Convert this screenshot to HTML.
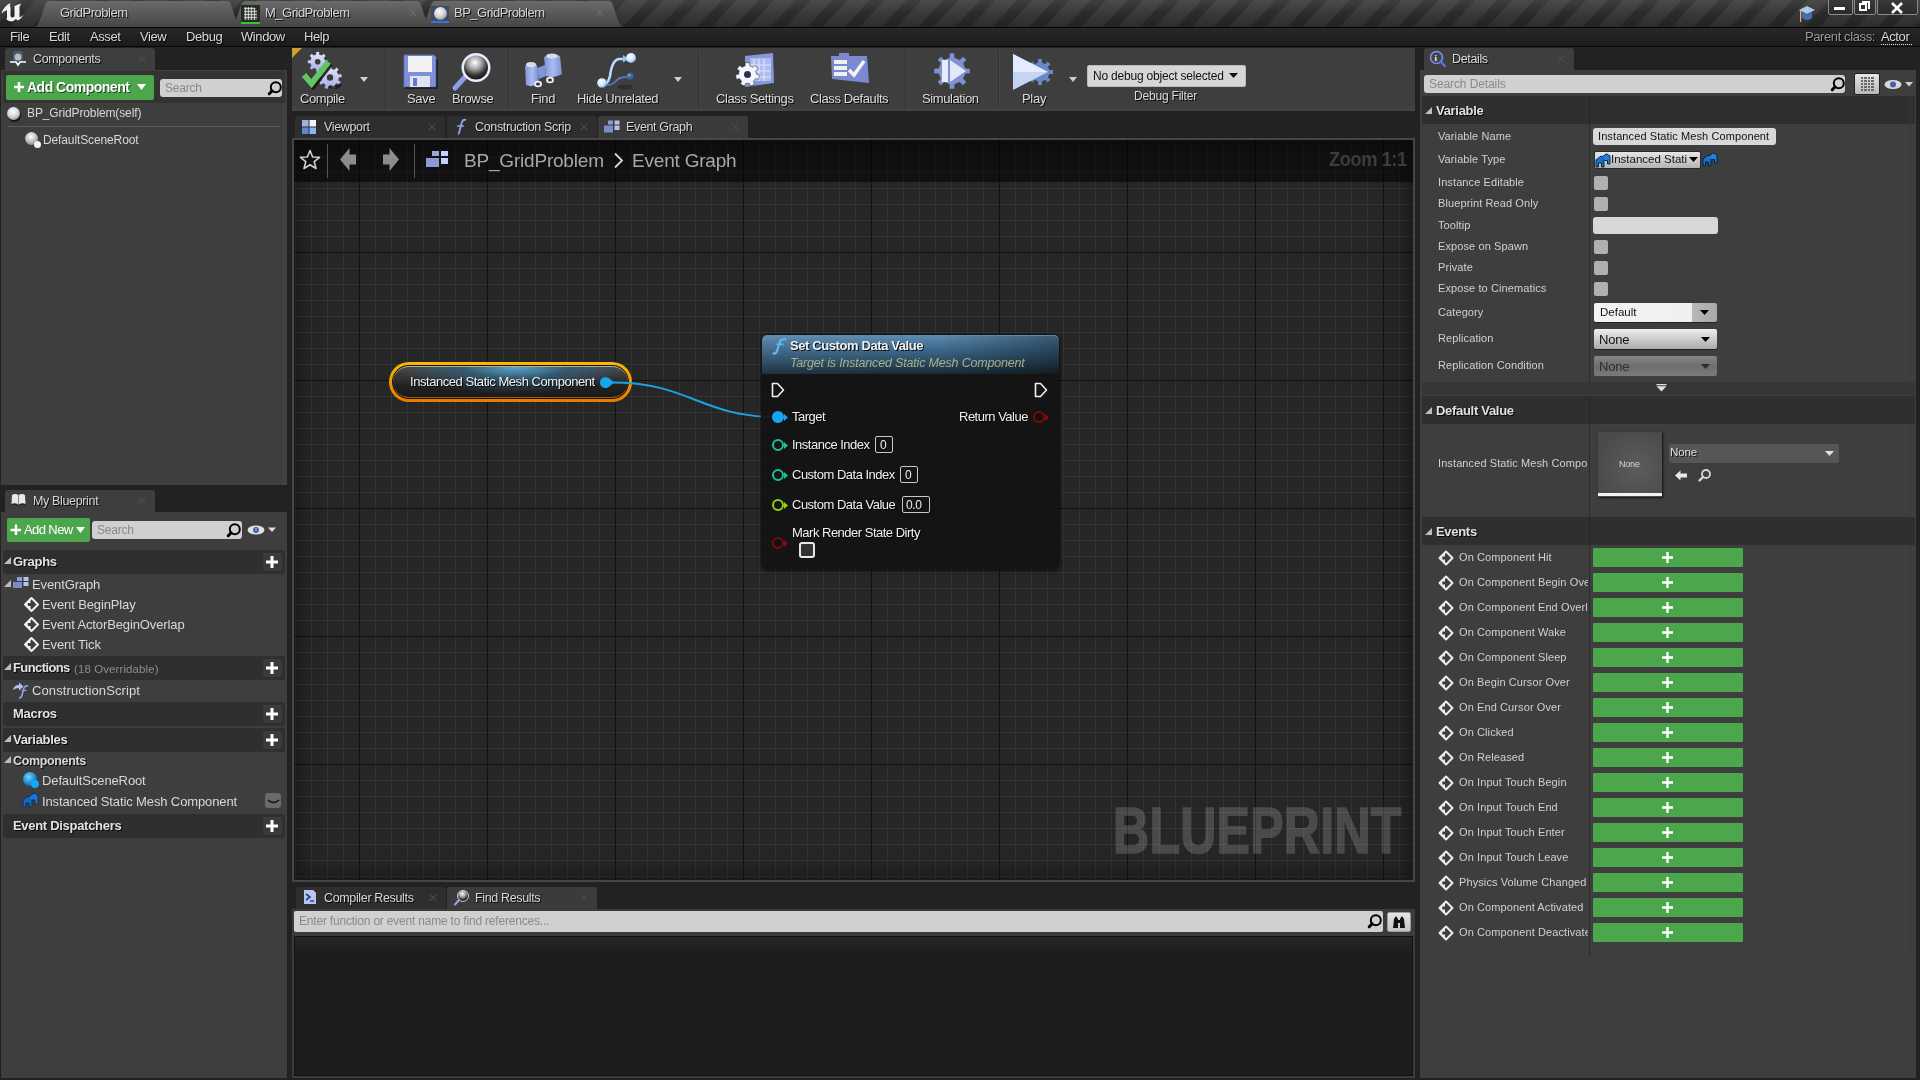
<!DOCTYPE html>
<html><head><meta charset="utf-8">
<style>
*{box-sizing:border-box;margin:0;padding:0}
html,body{width:1920px;height:1080px;overflow:hidden;background:#222;-webkit-font-smoothing:antialiased;font-family:"Liberation Sans",sans-serif;color:#dcdcdc}
.a{position:absolute}
.t{position:absolute;white-space:nowrap;line-height:1;font-size:13px;letter-spacing:-0.4px}
.sh{text-shadow:1px 1px 0 rgba(0,0,0,.9)}
.panel{background:#3e3e3e}
.tab{background:#3e3e3e;border-radius:3px 3px 0 0}
.itab{background:#2f2f2f;border-radius:3px 3px 0 0}
.x{position:absolute;color:#555;font-size:12px;line-height:1}
svg{position:absolute;overflow:visible}
</style></head><body><div id="root" style="position:absolute;left:0;top:0;width:1920px;height:1080px;will-change:transform">
<div class="a" style="left:0;top:0;width:1920px;height:27px;background:linear-gradient(to bottom,rgba(255,255,255,.09),rgba(255,255,255,0) 50%,rgba(0,0,0,.22)),repeating-linear-gradient(133deg,#393939 0,#393939 14px,#2b2b2b 16px,#2b2b2b 25px,#393939 27px)"></div>
<div class="a" style="left:0;top:27px;width:1920px;height:1px;background:#050505"></div>
<div class="a" style="left:0;top:28px;width:1920px;height:18px;background:linear-gradient(#272727,#1c1c1c)"></div>
<div class="a" style="left:0;top:46px;width:1920px;height:1px;background:#070707"></div>
<!-- UE logo -->
<svg style="left:0;top:0" width="30" height="27"><path d="M1.2 13.5 C3 9 6 5 10.5 3 L9.8 6 L10.5 7 L10.5 16 Q11 17.5 12.5 17.5 L14.5 16.5 L14.5 7 L14 6.5 Q17 4.5 21.5 3.5 L19.5 6.5 L19.5 17.5 Q21 16.5 23.5 15 Q20 20 17.5 20.5 L16 19 Q13 21.5 11.5 21.5 Q8 21 6 19 L7 18 L7 10 Q4 11 1.2 13.5 Z" fill="#f4f4f4"/></svg>
<!-- tabs -->
<svg style="left:0;top:0" width="640" height="27">
<defs>
<linearGradient id="tg" x1="0" y1="0" x2="0" y2="1"><stop offset="0" stop-color="#6a6a6a"/><stop offset="1" stop-color="#464646"/></linearGradient>
<linearGradient id="tga" x1="0" y1="0" x2="0" y2="1"><stop offset="0" stop-color="#6a6a6a"/><stop offset="1" stop-color="#464646"/></linearGradient>
</defs>
<path d="M34 27 C38 26.5 39 22 41 17 L45 5 C46 2 47 1 50 1 L226 1 C229 1 230 2 231 5 L235 17 C237 22 238 26.5 242 27 Z" fill="url(#tg)"/>
<path d="M230 27 C234 26.5 235 22 237 17 L241 5 C242 2 243 1 246 1 L416 1 C419 1 420 2 421 5 L425 17 C427 22 428 26.5 432 27 Z" fill="url(#tg)"/>
<path d="M420 27 C424 26.5 425 22 427 17 L431 5 C432 2 433 1 436 1 L608 1 C611 1 612 2 613 5 L617 17 C619 22 620 26.5 624 27 Z" fill="url(#tga)"/>
</svg>
<div class="t sh" style="left:60px;top:6px;font-size:13px;color:#d6d6d6;letter-spacing:-0.5px">GridProblem</div>
<!-- M icon -->
<div class="a" style="left:241px;top:5px;width:19px;height:19px;background:#24301f;border-bottom:2px solid #39c239"></div>
<div class="a" style="left:244px;top:7px;width:13px;height:13px;background:radial-gradient(circle,#e8e8e8 0.9px,transparent 1.2px) 0 0/3px 3px,#555;clip-path:polygon(0 0,75% 0,100% 25%,100% 100%,0 100%)"></div>
<div class="t sh" style="left:265px;top:6px;font-size:13px;color:#d6d6d6;letter-spacing:-0.5px">M_GridProblem</div>
<div class="x" style="left:408px;top:7px;color:#6a6a6a">&#x2715;</div>
<!-- BP icon -->
<div class="a" style="left:431px;top:6px;width:18px;height:17px;background:#3d4a63;border-bottom:2px solid #3a6fe6"></div>
<div class="a" style="left:434px;top:7px;width:13px;height:13px;border-radius:50%;background:radial-gradient(circle at 40% 35%,#fff,#ccc 50%,#777 90%)"></div>
<div class="t sh" style="left:454px;top:6px;font-size:13px;color:#d6d6d6;letter-spacing:-0.5px">BP_GridProblem</div>
<div class="x" style="left:595px;top:7px;color:#6a6a6a">&#x2715;</div>
<!-- cap -->
<svg style="left:1798px;top:5px" width="20" height="20">
<path d="M1 5 L9 1 L17 5 L9 9 Z" fill="#a9cbe6"/>
<path d="M4 7 L4 13 Q9 17 14 13 L14 7 L9 9 Z" fill="#4a6cae"/>
<rect x="2" y="6" width="1.2" height="11" fill="#e3b86a"/>
</svg>
<!-- window buttons -->
<div class="a" style="left:1828px;top:-2px;width:25px;height:17px;border:1px solid #8a8a8a;border-radius:2px;background:linear-gradient(#3a3a3a,#2a2a2a)"></div>
<div class="a" style="left:1834px;top:7px;width:11px;height:3px;background:#fff"></div>
<div class="a" style="left:1854px;top:-2px;width:22px;height:17px;border:1px solid #8a8a8a;border-radius:2px;background:linear-gradient(#3a3a3a,#2a2a2a)"></div>
<div class="a" style="left:1859px;top:3px;width:8px;height:8px;border:2px solid #fff"></div>
<div class="a" style="left:1862px;top:1px;width:8px;height:8px;border-top:2px solid #fff;border-right:2px solid #fff"></div>
<div class="a" style="left:1877px;top:-2px;width:41px;height:17px;border:1px solid #8a8a8a;border-radius:2px;background:linear-gradient(#3a3a3a,#2a2a2a)"></div>
<svg style="left:1890px;top:2px" width="14" height="12"><path d="M2 1 L12 11 M12 1 L2 11" stroke="#fff" stroke-width="2.6"/></svg>
<!-- menu -->
<div class="t sh" style="left:10px;top:30px;color:#d8d8d8">File</div>
<div class="t sh" style="left:49px;top:30px;color:#d8d8d8">Edit</div>
<div class="t sh" style="left:90px;top:30px;color:#d8d8d8">Asset</div>
<div class="t sh" style="left:140px;top:30px;color:#d8d8d8">View</div>
<div class="t sh" style="left:186px;top:30px;color:#d8d8d8">Debug</div>
<div class="t sh" style="left:241px;top:30px;color:#d8d8d8">Window</div>
<div class="t sh" style="left:304px;top:30px;color:#d8d8d8">Help</div>
<div class="t sh" style="left:1805px;top:30px;color:#9a9a9a">Parent class:</div>
<div class="t sh" style="left:1881px;top:30px;color:#d8d8d8">Actor</div>
<div class="a" style="left:1881px;top:44px;width:31px;height:0;border-top:1px dotted #ddd"></div>

<!-- Components tab -->
<div class="a tab" style="left:5px;top:48px;width:150px;height:22px;background:#3e3e3e"></div>
<svg style="left:9px;top:50px" width="18" height="18">
<rect x="4" y="1" width="10" height="11" rx="2" fill="#46587a"/>
<circle cx="9" cy="7" r="3.5" fill="#bbb"/>
<path d="M1 12 L7 12 L9 15 L11 12 L17 12" stroke="#fff" stroke-width="1.6" fill="none"/>
</svg>
<div class="t sh" style="left:33px;top:53px;color:#d6d6d6;font-size:12.5px;letter-spacing:-0.35px">Components</div>
<div class="x" style="left:137px;top:53px;color:#4c4c4c">&#x2715;</div>
<div class="a" style="left:1px;top:70px;width:286px;height:415px;background:#3e3e3e"></div>
<div class="a" style="left:3px;top:71px;width:282px;height:32px;background:#333"></div>
<div class="a" style="left:6px;top:75px;width:148px;height:25px;background:#4ca64c;border-radius:2px"></div>
<svg style="left:13px;top:81px" width="12" height="12"><path d="M6 1 V11 M1 6 H11" stroke="#fff" stroke-width="2.6"/></svg>
<div class="t" style="left:27px;top:80px;font-weight:bold;font-size:14px;color:#fff;letter-spacing:-0.5px;text-shadow:1px 1px 0 rgba(0,0,0,.6)">Add Component</div>
<svg style="left:137px;top:84px" width="10" height="8"><path d="M0 0 H9 L4.5 6 Z" fill="#fff"/></svg>
<div class="a" style="left:160px;top:79px;width:122px;height:18px;background:#d0d0d0;border-radius:3px"></div>
<div class="t" style="left:165px;top:82px;color:#8a8a8a;font-size:12px;letter-spacing:-0.2px">Search</div>
<svg style="left:266px;top:81px" width="16" height="15"><circle cx="9.8" cy="6.2" r="5" stroke="#000" stroke-width="2" fill="none"/><path d="M6.2 9.8 L3.2 12.8" stroke="#000" stroke-width="3" stroke-linecap="round"/></svg>
<div class="a" style="left:282px;top:103px;width:5px;height:382px;background:#424242"></div>
<!-- BP_GridProblem(self) -->
<div class="a" style="left:7px;top:107px;width:13px;height:13px;border-radius:50%;background:radial-gradient(circle at 45% 35%,#fff,#d8d8d8 45%,#8a8a8a 85%);box-shadow:1px 2px 1px rgba(0,0,0,.7)"></div>
<div class="t" style="left:27px;top:107px;font-size:12px;letter-spacing:-0.12px;color:#d8d8d8">BP_GridProblem(self)</div>
<div class="a" style="left:8px;top:126px;width:272px;height:1px;background:#585858"></div>
<div class="a" style="left:25px;top:132px;width:13px;height:13px;border-radius:50%;background:radial-gradient(circle at 45% 35%,#fff,#bbb 50%,#777 90%)"></div>
<div class="a" style="left:34px;top:141px;width:7px;height:7px;border-radius:50%;background:#f4f4f4"></div>
<div class="t" style="left:43px;top:134px;font-size:12px;letter-spacing:-0.1px;color:#d8d8d8;letter-spacing:-0.12px">DefaultSceneRoot</div>

<!-- My Blueprint tab -->
<div class="a tab" style="left:5px;top:490px;width:150px;height:22px;background:#3e3e3e"></div>
<svg style="left:11px;top:492px" width="16" height="16">
<path d="M1 3 Q4 1 7.5 3 Q11 1 14 3 L14.5 12 Q11 10.5 7.5 12.5 Q4 10.5 0.5 12 Z" fill="#e8e8e8"/>
<path d="M7.5 3 V12.5" stroke="#888" stroke-width="1"/>
<path d="M0.5 12.5 Q4 11.5 7.5 13.5 Q11 11.5 14.5 12.5" stroke="#222" stroke-width="1" fill="none"/>
</svg>
<div class="t sh" style="left:33px;top:495px;color:#d6d6d6;font-size:12.5px;letter-spacing:-0.35px">My Blueprint</div>
<div class="x" style="left:137px;top:495px;color:#4c4c4c">&#x2715;</div>
<div class="a" style="left:1px;top:512px;width:286px;height:566px;background:#3e3e3e"></div>
<div class="a" style="left:7px;top:518px;width:83px;height:24px;background:#4ca64c;border-radius:2px"></div>
<svg style="left:10px;top:524px" width="12" height="12"><path d="M6 0.5 V11 M0.5 6 H11" stroke="#fff" stroke-width="2.4"/></svg>
<div class="t" style="left:24px;top:523px;font-size:13px;color:#fff;letter-spacing:-0.6px">Add New</div>
<svg style="left:76px;top:527px" width="10" height="8"><path d="M0 0 H9 L4.5 6 Z" fill="#fff"/></svg>
<div class="a" style="left:92px;top:521px;width:150px;height:18px;background:#d0d0d0;border-radius:3px"></div>
<div class="t" style="left:97px;top:524px;color:#8a8a8a;font-size:12px;letter-spacing:-0.2px">Search</div>
<svg style="left:225px;top:523px" width="16" height="15"><circle cx="9.8" cy="6.2" r="5" stroke="#000" stroke-width="2" fill="none"/><path d="M6.2 9.8 L3.2 12.8" stroke="#000" stroke-width="3" stroke-linecap="round"/></svg>
<svg style="left:247px;top:524px" width="30" height="12">
<ellipse cx="9" cy="6" rx="8.5" ry="4.5" fill="#e0e0e0"/><circle cx="9" cy="6" r="3" fill="#4760a8"/><circle cx="9" cy="5.5" r="1.2" fill="#8a9ee0"/>
<path d="M21 3.5 H29 L25 8 Z" fill="#ddd"/>
</svg>

<!-- Graphs header -->
<div class="a" style="left:3px;top:550px;width:282px;height:24px;background:#2f2f2f;border-radius:3px"></div>
<svg style="left:4px;top:557px" width="8" height="8"><path d="M7 0 V7 H0 Z" fill="#bdbdbd"/></svg>
<div class="t sh" style="left:13px;top:555px;font-weight:bold;color:#e2e2e2;letter-spacing:-0.3px">Graphs</div>
<div class="a" style="left:263px;top:553px;width:19px;height:18px;background:#3a3a3a;border-radius:2px"></div>
<svg style="left:266px;top:556px" width="12" height="12"><path d="M6 0 V12 M0 6 H12" stroke="#fff" stroke-width="3"/></svg>
<svg style="left:4px;top:580px" width="8" height="8"><path d="M7 0 V7 H0 Z" fill="#bdbdbd"/></svg>
<svg style="left:13px;top:576px" width="17" height="13">
<rect x="4" y="1" width="5" height="4" fill="#8d9bd6"/><rect x="10.5" y="1" width="5" height="4" fill="#b8c2ee"/>
<rect x="0" y="6" width="9" height="6" fill="#7c8bc9"/><rect x="10.5" y="6" width="5" height="4" fill="#b8c2ee"/>
</svg>
<div class="t" style="left:32px;top:578px;color:#d8d8d8;letter-spacing:-0.12px">EventGraph</div>
<svg style="left:24px;top:597px" width="15" height="15"><path d="M7.5 1 L14 7.5 L7.5 14 L1 7.5 Z" stroke="#f2f2f2" stroke-width="2" fill="none" stroke-linejoin="round"/><path d="M1 7.5 L6.5 2 L6.5 13 Z" fill="#f2f2f2"/><rect x="3.8" y="6" width="3.2" height="3" fill="#3e3e3e"/></svg>
<div class="t" style="left:42px;top:598px;color:#d8d8d8;letter-spacing:-0.12px">Event BeginPlay</div>
<svg style="left:24px;top:617px" width="15" height="15"><path d="M7.5 1 L14 7.5 L7.5 14 L1 7.5 Z" stroke="#f2f2f2" stroke-width="2" fill="none" stroke-linejoin="round"/><path d="M1 7.5 L6.5 2 L6.5 13 Z" fill="#f2f2f2"/><rect x="3.8" y="6" width="3.2" height="3" fill="#3e3e3e"/></svg>
<div class="t" style="left:42px;top:618px;color:#d8d8d8;letter-spacing:-0.12px">Event ActorBeginOverlap</div>
<svg style="left:24px;top:637px" width="15" height="15"><path d="M7.5 1 L14 7.5 L7.5 14 L1 7.5 Z" stroke="#f2f2f2" stroke-width="2" fill="none" stroke-linejoin="round"/><path d="M1 7.5 L6.5 2 L6.5 13 Z" fill="#f2f2f2"/><rect x="3.8" y="6" width="3.2" height="3" fill="#3e3e3e"/></svg>
<div class="t" style="left:42px;top:638px;color:#d8d8d8;letter-spacing:-0.12px">Event Tick</div>

<!-- Functions -->
<div class="a" style="left:3px;top:656px;width:282px;height:24px;background:#2f2f2f;border-radius:3px"></div>
<svg style="left:4px;top:663px" width="8" height="8"><path d="M7 0 V7 H0 Z" fill="#bdbdbd"/></svg>
<div class="t sh" style="left:13px;top:661px;font-weight:bold;color:#e2e2e2;letter-spacing:-0.6px">Functions</div>
<div class="t" style="left:74px;top:664px;color:#8c8c8c;font-size:11.5px;letter-spacing:0.1px">(18 Overridable)</div>
<div class="a" style="left:263px;top:659px;width:19px;height:18px;background:#3a3a3a;border-radius:2px"></div>
<svg style="left:266px;top:662px" width="12" height="12"><path d="M6 0 V12 M0 6 H12" stroke="#fff" stroke-width="3"/></svg>
<svg style="left:12px;top:682px" width="18" height="17"><path d="M1 8 Q2 3 7 3 L7 0.5 L11.5 4.5 L7 8.5 L7 6 Q3.5 6 1 8 Z" fill="#b4c2f0"/><path d="M7.5 16 Q9.5 16 10.3 12 L12 6 Q12.8 3.5 15.5 4" stroke="#8fa1e6" stroke-width="1.6" fill="none" stroke-linecap="round"/><path d="M9.5 8.5 H14.5" stroke="#8fa1e6" stroke-width="1.2"/></svg>
<div class="t" style="left:32px;top:684px;color:#d8d8d8;letter-spacing:0.1px">ConstructionScript</div>

<!-- Macros -->
<div class="a" style="left:3px;top:702px;width:282px;height:24px;background:#2f2f2f;border-radius:3px"></div>
<div class="t sh" style="left:13px;top:707px;font-weight:bold;color:#e2e2e2;letter-spacing:-0.3px">Macros</div>
<div class="a" style="left:263px;top:705px;width:19px;height:18px;background:#3a3a3a;border-radius:2px"></div>
<svg style="left:266px;top:708px" width="12" height="12"><path d="M6 0 V12 M0 6 H12" stroke="#fff" stroke-width="3"/></svg>
<!-- Variables -->
<div class="a" style="left:3px;top:728px;width:282px;height:24px;background:#2f2f2f;border-radius:3px"></div>
<svg style="left:4px;top:735px" width="8" height="8"><path d="M7 0 V7 H0 Z" fill="#bdbdbd"/></svg>
<div class="t sh" style="left:13px;top:733px;font-weight:bold;color:#e2e2e2;letter-spacing:-0.3px">Variables</div>
<div class="a" style="left:263px;top:731px;width:19px;height:18px;background:#3a3a3a;border-radius:2px"></div>
<svg style="left:266px;top:734px" width="12" height="12"><path d="M6 0 V12 M0 6 H12" stroke="#fff" stroke-width="3"/></svg>
<svg style="left:4px;top:756px" width="8" height="8"><path d="M7 0 V7 H0 Z" fill="#bdbdbd"/></svg>
<div class="t sh" style="left:13px;top:755px;font-weight:bold;font-size:12px;color:#d8d8d8;font-size:12.5px;letter-spacing:-0.35px">Components</div>
<div class="a" style="left:23px;top:772px;width:14px;height:14px;border-radius:50%;background:radial-gradient(circle at 40% 35%,#7fd0ff,#1e8fd8 50%,#0b5a9a 90%)"></div>
<div class="a" style="left:31px;top:780px;width:8px;height:8px;border-radius:50%;background:#15a8f0"></div>
<div class="t" style="left:42px;top:774px;color:#d8d8d8;letter-spacing:-0.12px">DefaultSceneRoot</div>
<svg style="left:22px;top:792px" width="17" height="16">
<path d="M1 8 L6 4 L10 6 L10 15 L7 15 L7 11 L4 11 L4 15 L1 15 Z" fill="#1565b8" stroke="#0a2a50" stroke-width=".8"/>
<path d="M7 5 L12 1 L16 3 L16 12 L13 12 L13 8 L10 8" fill="#1a78d0" stroke="#0a2a50" stroke-width=".8"/>
</svg>
<div class="t" style="left:42px;top:795px;color:#d8d8d8;letter-spacing:-0.12px">Instanced Static Mesh Component</div>
<div class="a" style="left:265px;top:793px;width:16px;height:15px;background:#6a6a6a;border-radius:3px"></div>
<svg style="left:268px;top:800px" width="11" height="4"><path d="M0 0 Q5.5 5 11 0" stroke="#111" stroke-width="1.6" fill="none"/></svg>
<!-- Event Dispatchers -->
<div class="a" style="left:3px;top:814px;width:282px;height:24px;background:#2f2f2f;border-radius:3px"></div>
<div class="t sh" style="left:13px;top:819px;font-weight:bold;color:#e2e2e2;letter-spacing:-0.3px">Event Dispatchers</div>
<div class="a" style="left:263px;top:817px;width:19px;height:18px;background:#3a3a3a;border-radius:2px"></div>
<svg style="left:266px;top:820px" width="12" height="12"><path d="M6 0 V12 M0 6 H12" stroke="#fff" stroke-width="3"/></svg>

<div class="a" style="left:292px;top:48px;width:1123px;height:63px;background:linear-gradient(#3e3e3e 0,#3e3e3e 90%,#444 100%)"></div>
<svg style="left:292px;top:48px" width="12" height="12"><path d="M0 0 H10 L0 10 Z" fill="#c9a227"/></svg>
<div class="a" style="left:385px;top:50px;width:2px;height:59px;background:#333;border-right:1px solid #454545"></div>
<div class="a" style="left:508px;top:50px;width:2px;height:59px;background:#333;border-right:1px solid #454545"></div>
<div class="a" style="left:698px;top:50px;width:2px;height:59px;background:#333;border-right:1px solid #454545"></div>
<div class="a" style="left:905px;top:50px;width:2px;height:59px;background:#333;border-right:1px solid #454545"></div>
<div class="a" style="left:998px;top:50px;width:2px;height:59px;background:#333;border-right:1px solid #454545"></div>
<svg style="left:300px;top:50px" width="50" height="45"><defs><linearGradient id="gg" x1="0" y1="0" x2="0" y2="1"><stop offset="0" stop-color="#e6e9ff"/><stop offset="1" stop-color="#a3aae0"/></linearGradient></defs><path d="M16.3 4.5 L16.2 1.9 L19.2 1.9 L19.1 4.5 L21.8 5.6 L23.6 3.8 L25.7 5.9 L23.9 7.7 L25.0 10.4 L27.6 10.3 L27.6 13.3 L25.0 13.2 L23.9 15.9 L25.7 17.7 L23.6 19.8 L21.8 18.0 L19.1 19.1 L19.2 21.7 L16.2 21.7 L16.3 19.1 L13.6 18.0 L11.8 19.8 L9.7 17.7 L11.5 15.9 L10.4 13.2 L7.8 13.3 L7.8 10.3 L10.4 10.4 L11.5 7.7 L9.7 5.9 L11.8 3.8 L13.6 5.6Z" fill="url(#gg)"/><circle cx="17.7" cy="11.8" r="2.8" fill="#3a3a3a"/><path d="M28.5 18.8 L28.4 15.8 L31.6 15.8 L31.5 18.8 L34.4 19.9 L36.3 17.5 L38.7 19.5 L36.7 21.8 L38.3 24.5 L41.2 23.9 L41.8 27.0 L38.8 27.5 L38.3 30.5 L40.9 32.0 L39.3 34.7 L36.7 33.2 L34.4 35.1 L35.5 38.0 L32.5 39.0 L31.5 36.2 L28.5 36.2 L27.5 39.0 L24.5 38.0 L25.6 35.1 L23.3 33.2 L20.7 34.7 L19.1 32.0 L21.7 30.5 L21.2 27.5 L18.2 27.0 L18.8 23.9 L21.7 24.5 L23.3 21.8 L21.3 19.5 L23.7 17.5 L25.6 19.9Z" fill="url(#gg)"/><circle cx="30" cy="27.5" r="3.2" fill="#3a3a3a"/><path d="M29 36 Q36 40 41 34" stroke="#111" stroke-width="3" fill="none" opacity=".7"/><path d="M4 25 L11.5 33.5 L28.5 12" stroke="#111" stroke-width="7" fill="none" stroke-miterlimit="2" transform="translate(1.5,1.5)" opacity=".85"/><path d="M4 25 L11.5 33.5 L28.5 12" stroke="#62c463" stroke-width="6" fill="none" stroke-miterlimit="2"/></svg>
<div class="t sh" style="left:300px;top:92px;font-size:13px;color:#dcdcdc;letter-spacing:-0.4px">Compile</div>
<svg style="left:360px;top:77px" width="10" height="6"><path d="M0 0 H8 L4 5 Z" fill="#cfcfcf"/></svg>
<svg style="left:403px;top:54px" width="36" height="36">
<path d="M1 1 H31 L33 3 V33 H1 Z" fill="#7f8fd8" stroke="#5f6fb8" stroke-width="1"/>
<rect x="5" y="2" width="24" height="16" fill="#f2f2f2"/><rect x="7" y="22" width="20" height="11" fill="#dfe3f6"/><rect x="10" y="24" width="4" height="8" fill="#6778c8"/>
<path d="M2 34 H34 V5" stroke="#111" stroke-width="2" fill="none" opacity=".6"/>
</svg>
<div class="t sh" style="left:407px;top:92px;font-size:13px;color:#dcdcdc;letter-spacing:-0.3px">Save</div>
<svg style="left:450px;top:51px" width="45" height="42"><defs><radialGradient id="bg1" cx=".45" cy=".3" r=".75"><stop offset="0" stop-color="#fff"/><stop offset=".35" stop-color="#aaa"/><stop offset=".7" stop-color="#333"/><stop offset="1" stop-color="#111"/></radialGradient></defs><path d="M15 26 L5 37" stroke="#8d9de6" stroke-width="5" stroke-linecap="round"/><circle cx="26" cy="16.5" r="14.5" fill="#e8ecff"/><circle cx="26" cy="16.5" r="12" fill="url(#bg1)"/></svg>
<div class="t sh" style="left:452px;top:92px;font-size:13px;color:#dcdcdc;letter-spacing:-0.3px">Browse</div>
<svg style="left:522px;top:52px" width="44" height="40"><defs><linearGradient id="bn" x1="0" y1="0" x2="1" y2="0"><stop offset="0" stop-color="#7f95d8"/><stop offset=".5" stop-color="#a9bbf0"/><stop offset="1" stop-color="#7d90d0"/></linearGradient></defs><path d="M3 14 Q9 10 15 13 L17 31 Q11 36 4 33 Z" fill="url(#bn)"/><path d="M22 5 Q30 1 38 4 L40 22 Q32 27 24 24 Z" fill="url(#bn)"/><path d="M15 16 L23 13 L24 24 L17 27 Z" fill="#8196d6"/><ellipse cx="9" cy="12.5" rx="5" ry="2.6" fill="#d8dce8"/><ellipse cx="30" cy="4" rx="6" ry="2.6" fill="#d8dce8"/><ellipse cx="16" cy="32" rx="4" ry="3.2" fill="#e8ecf4"/><ellipse cx="16" cy="32" rx="2" ry="1.5" fill="#333"/><ellipse cx="28" cy="28" rx="4" ry="3.2" fill="#e8ecf4"/><ellipse cx="28" cy="28" rx="2" ry="1.5" fill="#333"/></svg>
<div class="t sh" style="left:531px;top:92px;font-size:13px;color:#dcdcdc;letter-spacing:-0.3px">Find</div>
<svg style="left:595px;top:50px" width="45" height="42"><defs><radialGradient id="hb" cx=".4" cy=".35" r=".7"><stop offset="0" stop-color="#fff"/><stop offset=".6" stop-color="#cfe6ff"/><stop offset="1" stop-color="#6a9ee0"/></radialGradient></defs><ellipse cx="30" cy="37" rx="8" ry="2.5" fill="#111" opacity=".35"/><path d="M9 34 Q13 34 15 26 Q17 10 24 9 L29 9" stroke="#b8dcff" stroke-width="2.6" fill="none"/><path d="M28 5 L33.5 9 L28 12.5 Z" fill="#8cc4f4"/><path d="M10 35 Q18 35 21 31 Q24 27 32 27" stroke="#5a74b8" stroke-width="2" fill="none"/><circle cx="7" cy="33" r="4.8" fill="url(#hb)"/><circle cx="36" cy="8" r="5" fill="url(#hb)"/><circle cx="35" cy="26" r="3.5" fill="#3f5fa8"/><circle cx="34.3" cy="25.3" r="1.4" fill="#7fb070"/></svg>
<div class="t sh" style="left:577px;top:92px;font-size:13px;color:#dcdcdc;letter-spacing:-0.4px">Hide Unrelated</div>
<svg style="left:674px;top:77px" width="10" height="6"><path d="M0 0 H8 L4 5 Z" fill="#cfcfcf"/></svg>
<svg style="left:728px;top:53px" width="50" height="40">
<path d="M17 3 L45 0 L46 30 L17 34 Z" fill="#8797dc"/><path d="M22 5 H43 V28 H22 Z" fill="#b0bcf0"/>
<path d="M26 6 V28 M31 6 V28 M36 6 V28 M22 12 H43 M22 18 H43 M22 24 H43" stroke="#dde3ff" stroke-width="1.2"/>
<path d="M17.3 12.8 L17.2 9.7 L21.8 9.7 L21.7 12.8 L25.0 14.3 L27.3 12.4 L30.1 16.0 L27.7 17.8 L28.5 21.3 L31.5 21.9 L30.5 26.4 L27.5 25.6 L25.3 28.4 L26.7 31.1 L22.5 33.1 L21.3 30.3 L17.7 30.3 L16.5 33.1 L12.3 31.1 L13.7 28.4 L11.5 25.6 L8.5 26.4 L7.5 21.9 L10.5 21.3 L11.3 17.8 L8.9 16.0 L11.7 12.4 L14.0 14.3Z" fill="#f4f6ff" stroke="#222" stroke-width=".5"/><circle cx="19.5" cy="21.5" r="3.5" fill="#2a3050"/>
</svg>
<div class="t sh" style="left:716px;top:92px;font-size:13px;color:#dcdcdc;letter-spacing:-0.4px">Class Settings</div>
<svg style="left:829px;top:53px" width="42" height="38">
<path d="M2 3 H38 L40 30 L3 26 Z" fill="#7b8ad0"/><path d="M10 0 H20 V4 H10Z" fill="#7b8ad0"/>
<rect x="5" y="7" width="13" height="4" fill="#f0f0f0"/><rect x="5" y="13" width="13" height="4" fill="#f0f0f0"/><rect x="5" y="19" width="13" height="4" fill="#f0f0f0"/>
<path d="M20 17 L25 22 L35 8" stroke="#f4f4f4" stroke-width="3.5" fill="none"/>
</svg>
<div class="t sh" style="left:810px;top:92px;font-size:13px;color:#dcdcdc;letter-spacing:-0.4px">Class Defaults</div>
<svg style="left:930px;top:52px" width="45" height="40">
<path d="M19.6 5.7 L19.7 1.2 L24.3 1.2 L24.4 5.7 L29.7 7.9 L33.0 4.7 L36.3 8.0 L33.1 11.3 L35.3 16.6 L39.8 16.7 L39.8 21.3 L35.3 21.4 L33.1 26.7 L36.3 30.0 L33.0 33.3 L29.7 30.1 L24.4 32.3 L24.3 36.8 L19.7 36.8 L19.6 32.3 L14.3 30.1 L11.0 33.3 L7.7 30.0 L10.9 26.7 L8.7 21.4 L4.2 21.3 L4.2 16.7 L8.7 16.6 L10.9 11.3 L7.7 8.0 L11.0 4.7 L14.3 7.9Z" fill="#8090d0"/>
<rect x="12" y="8" width="6" height="22" fill="#e8ecfa"/><path d="M20 8 L36 19 L20 30 Z" fill="#e2e8fa"/>
</svg>
<div class="t sh" style="left:922px;top:92px;font-size:13px;color:#dcdcdc;letter-spacing:-0.4px">Simulation</div>
<svg style="left:1010px;top:52px" width="50" height="42">
<path d="M28.1 10.7 L28.1 7.1 L31.9 7.1 L31.9 10.7 L35.3 12.1 L37.7 9.5 L40.5 12.3 L37.9 14.7 L39.3 18.1 L42.9 18.1 L42.9 21.9 L39.3 21.9 L37.9 25.3 L40.5 27.7 L37.7 30.5 L35.3 27.9 L31.9 29.3 L31.9 32.9 L28.1 32.9 L28.1 29.3 L24.7 27.9 L22.3 30.5 L19.5 27.7 L22.1 25.3 L20.7 21.9 L17.1 21.9 L17.1 18.1 L20.7 18.1 L22.1 14.7 L19.5 12.3 L22.3 9.5 L24.7 12.1Z" fill="#6a88c8"/>
<path d="M3 2 L38 20 L3 38 Z" fill="#c6d4f4"/><path d="M3 2 L38 20 L3 20 Z" fill="#e2ebff"/>
</svg>
<div class="t sh" style="left:1022px;top:92px;font-size:13px;color:#dcdcdc;letter-spacing:-0.3px">Play</div>
<svg style="left:1069px;top:77px" width="10" height="6"><path d="M0 0 H8 L4 5 Z" fill="#cfcfcf"/></svg>
<div class="a" style="left:1087px;top:65px;width:159px;height:22px;background:#d6d6d6;border-radius:2px;border:1px solid #bbb"></div>
<div class="t" style="left:1093px;top:70px;font-size:12px;color:#111;letter-spacing:-0.2px">No debug object selected</div>
<svg style="left:1229px;top:73px" width="10" height="6"><path d="M0 0 H9 L4.5 5 Z" fill="#111"/></svg>
<div class="t sh" style="left:1134px;top:90px;font-size:12px;color:#dcdcdc;letter-spacing:-0.2px">Debug Filter</div>
<div class="a" style="left:295px;top:116px;width:150px;height:22px;background:#2e2e2e;border-radius:3px 3px 0 0"></div>
<div class="a" style="left:447px;top:116px;width:150px;height:22px;background:#2e2e2e;border-radius:3px 3px 0 0"></div>
<div class="a" style="left:598px;top:116px;width:150px;height:22px;background:#3b3b3b;border-radius:3px 3px 0 0"></div>
<svg style="left:302px;top:120px" width="15" height="15"><rect x="0" y="0" width="6.5" height="6.5" fill="#9ab2e6"/><rect x="7.5" y="0" width="6.5" height="6.5" fill="#f0f4ff"/><rect x="0" y="7.5" width="6.5" height="6.5" fill="#5f84d4"/><rect x="7.5" y="7.5" width="6.5" height="6.5" fill="#8eb2ee"/></svg>
<div class="t sh" style="left:324px;top:121px;color:#d8d8d8;font-size:12.5px;letter-spacing:-0.35px">Viewport</div>
<div class="x" style="left:427px;top:121px;color:#4a4a4a">&#x2715;</div>
<svg style="left:452px;top:118px" width="18" height="18"><path d="M6 16 Q7 16 8 11 L10 4 Q11 1 14 2" stroke="#98a8ee" stroke-width="1.8" fill="none"/><path d="M5 8 H12" stroke="#98a8ee" stroke-width="1.4"/></svg>
<div class="t sh" style="left:475px;top:121px;color:#d8d8d8;font-size:12.5px;letter-spacing:-0.35px">Construction Scrip</div>
<div class="x" style="left:579px;top:121px;color:#4a4a4a">&#x2715;</div>
<svg style="left:604px;top:120px" width="17" height="14"><rect x="4" y="0.5" width="5" height="4" fill="#8d9bd6"/><rect x="10.5" y="0.5" width="5" height="4" fill="#b8c2ee"/><rect x="0" y="5.5" width="9" height="7" fill="#7c8bc9"/><rect x="10.5" y="5.5" width="5" height="4.5" fill="#b8c2ee"/></svg>
<div class="t sh" style="left:626px;top:121px;color:#d8d8d8;font-size:12.5px;letter-spacing:-0.35px">Event Graph</div>
<div class="x" style="left:730px;top:121px;color:#4a4a4a">&#x2715;</div>
<div class="a" style="left:292px;top:138px;width:1123px;height:744px;background:#464646"></div>
<div class="a" style="left:294px;top:140px;width:1119px;height:740px;background-color:#262626;background-image:linear-gradient(to right,#121212 1px,transparent 1px),linear-gradient(to bottom,#121212 1px,transparent 1px),linear-gradient(to right,#333 1px,transparent 1px),linear-gradient(to bottom,#333 1px,transparent 1px);background-size:128px 100%,100% 128px,16px 100%,100% 16px;background-position:65px 0,0 112px,1px 0,0 0;"></div>
<div class="a" style="left:294px;top:140px;width:1119px;height:740px;box-shadow:inset 0 0 22px 4px rgba(0,0,0,.45)"></div>
<div class="a" style="left:294px;top:140px;width:1119px;height:42px;background:rgba(0,0,0,.55)"></div>
<svg style="left:299px;top:149px" width="22" height="22"><path d="M11 1.5 L13.6 8 L20.5 8.3 L15.2 12.7 L17 19.5 L11 15.7 L5 19.5 L6.8 12.7 L1.5 8.3 L8.4 8 Z" stroke="#d0d0d0" stroke-width="1.6" fill="none" stroke-linejoin="round"/></svg>
<div class="a" style="left:327px;top:144px;width:1px;height:34px;background:#555"></div>
<svg style="left:339px;top:147px" width="20" height="26"><path d="M1 12.5 L10.5 1 L10.5 7.5 L17 7.5 L17 17.5 L10.5 17.5 L10.5 24 Z" fill="#8c8c8c"/></svg>
<svg style="left:381px;top:147px" width="20" height="26"><path d="M18 12.5 L8.5 1 L8.5 7.5 L2 7.5 L2 17.5 L8.5 17.5 L8.5 24 Z" fill="#8c8c8c"/></svg>
<div class="a" style="left:414px;top:144px;width:1px;height:34px;background:#555"></div>
<svg style="left:426px;top:150px" width="25" height="20"><rect x="6" y="1" width="7" height="5" fill="#9aa6e0"/><rect x="15" y="1" width="7" height="5" fill="#c6ceff"/><rect x="0" y="8" width="13" height="9" fill="#8c9ad8"/><rect x="15" y="8" width="7" height="6" fill="#c6ceff"/></svg>
<div class="t" style="left:464px;top:151px;font-size:19px;color:#a8a8a8;letter-spacing:-0.2px">BP_GridProblem</div>
<svg style="left:613px;top:152px" width="12" height="18"><path d="M2 1.5 L9 8.5 L2 15.5" stroke="#d8d8d8" stroke-width="1.8" fill="none"/></svg>
<div class="t" style="left:632px;top:151px;font-size:19px;color:#a8a8a8;letter-spacing:-0.2px">Event Graph</div>
<div class="t" style="left:1329px;top:148px;font-size:21px;font-weight:bold;color:#3d3d3d;letter-spacing:-0.5px;transform:scaleX(.87);transform-origin:0 0">Zoom 1:1</div>
<div class="t" style="left:1113px;top:798px;font-size:65px;font-weight:bold;color:#fff;-webkit-text-stroke:1.6px #fff;opacity:.165;letter-spacing:0.3px;transform:scaleX(.77);transform-origin:0 0">BLUEPRINT</div>
<!-- variable node -->
<div class="a" style="left:389px;top:362px;width:243px;height:40px;border-radius:20px;background:linear-gradient(#fbb800,#f0a000 40%,#e67a00);"></div>
<div class="a" style="left:392px;top:365px;width:237px;height:34px;border-radius:17px;background:#141414"></div>
<div class="a" style="left:393px;top:366px;width:235px;height:32px;border-radius:16px;background:radial-gradient(ellipse 48% 90% at 52% 0%,rgba(90,170,215,.95),rgba(45,110,150,.55) 45%,rgba(30,60,80,0) 100%),linear-gradient(#4a4a4a 0,#333 35%,#222 60%,#1a1a1a 100%);border-top:1px solid rgba(235,225,190,.75);border-bottom:1px solid #a85c08"></div>
<div class="t sh" style="left:410px;top:375px;font-size:13px;color:#f2f2f2;letter-spacing:-0.45px">Instanced Static Mesh Component</div>
<div class="a" style="left:600px;top:377px;width:11px;height:11px;border-radius:50%;background:#16a6f0"></div>
<svg style="left:610px;top:379px" width="5" height="7"><path d="M0 0 L4 3.5 L0 7Z" fill="#16a6f0"/></svg>

<!-- wire -->
<svg style="left:0;top:0" width="1920" height="1080">
<path d="M612 382.5 C690 382.5 700 417 778 417" stroke="#1aa3e6" stroke-width="2" fill="none"/>
</svg>
<!-- function node -->
<div class="a" style="left:761px;top:334px;width:299px;height:235px;border-radius:6px;background:rgba(19,19,19,.93);box-shadow:0 2px 4px rgba(0,0,0,.6)"></div>
<div class="a" style="left:762px;top:335px;width:297px;height:39px;border-radius:5px 5px 0 0;background:linear-gradient(to bottom,#5d8bb0 0,#3f6a8c 35%,#2a4a60 70%,#1a2a35 100%)"></div>
<div class="a" style="left:762px;top:336px;width:297px;height:38px;border-radius:5px 5px 0 0;background:linear-gradient(to right,rgba(255,255,255,.03),rgba(0,0,0,0) 60%,rgba(0,0,0,.35))"></div>
<svg style="left:772px;top:338px" width="16" height="17"><path d="M1.5 15.5 Q4.5 16 5.5 11.5 L7.8 4 Q9 0.8 13.5 1.2" stroke="#5fb6f2" stroke-width="2.3" fill="none" stroke-linecap="round"/><path d="M4.5 6.3 H11.5" stroke="#5fb6f2" stroke-width="1.6"/></svg>
<div class="t sh" style="left:790px;top:339px;font-size:13px;font-weight:bold;color:#f0f0f0;letter-spacing:-0.4px">Set Custom Data Value</div>
<div class="t" style="left:790px;top:357px;font-size:12.5px;font-style:italic;color:#a5b08c;letter-spacing:-0.18px">Target is Instanced Static Mesh Component</div>
<!-- exec pins -->
<svg style="left:771px;top:382px" width="14" height="16"><path d="M1.5 1.5 H6.5 L12.5 8 L6.5 14.5 H1.5 Z" stroke="#f0f0f0" stroke-width="1.6" fill="none" stroke-linejoin="round"/></svg>
<svg style="left:1034px;top:382px" width="14" height="16"><path d="M1.5 1.5 H6.5 L12.5 8 L6.5 14.5 H1.5 Z" stroke="#f0f0f0" stroke-width="1.6" fill="none" stroke-linejoin="round"/></svg>
<!-- target -->
<div class="a" style="left:772px;top:411px;width:12px;height:12px;border-radius:50%;background:#16a6f0"></div>
<svg style="left:784px;top:414px" width="5" height="7"><path d="M0 0 L4 3.5 L0 7Z" fill="#16a6f0"/></svg>
<div class="t sh" style="left:792px;top:410px;color:#f0f0f0;letter-spacing:-0.5px">Target</div>
<div class="t sh" style="left:959px;top:410px;color:#f0f0f0;letter-spacing:-0.5px">Return Value</div>
<div class="a" style="left:1033px;top:411px;width:12px;height:12px;border-radius:50%;border:2px solid #7d0a0a;background:#111"></div>
<svg style="left:1045px;top:414px" width="5" height="7"><path d="M0 0 L4 3.5 L0 7Z" fill="#8a0c0c"/></svg>
<!-- instance index -->
<div class="a" style="left:772px;top:439px;width:12px;height:12px;border-radius:50%;border:2px solid #1fbf9a"></div>
<svg style="left:784px;top:442px" width="5" height="7"><path d="M0 0 L4 3.5 L0 7Z" fill="#1fbf9a"/></svg>
<div class="t sh" style="left:792px;top:438px;color:#f0f0f0;letter-spacing:-0.5px">Instance Index</div>
<div class="a" style="left:875px;top:436px;width:18px;height:17px;border:1px solid #c8c8c8;border-radius:2px"></div>
<div class="t" style="left:880px;top:439px;font-size:12px;color:#eee">0</div>
<!-- custom data index -->
<div class="a" style="left:772px;top:469px;width:12px;height:12px;border-radius:50%;border:2px solid #1fbf9a"></div>
<svg style="left:784px;top:472px" width="5" height="7"><path d="M0 0 L4 3.5 L0 7Z" fill="#1fbf9a"/></svg>
<div class="t sh" style="left:792px;top:468px;color:#f0f0f0;letter-spacing:-0.5px">Custom Data Index</div>
<div class="a" style="left:900px;top:466px;width:18px;height:17px;border:1px solid #c8c8c8;border-radius:2px"></div>
<div class="t" style="left:905px;top:469px;font-size:12px;color:#eee">0</div>
<!-- custom data value -->
<div class="a" style="left:772px;top:499px;width:12px;height:12px;border-radius:50%;border:2px solid #8ed312"></div>
<svg style="left:784px;top:502px" width="5" height="7"><path d="M0 0 L4 3.5 L0 7Z" fill="#8ed312"/></svg>
<div class="t sh" style="left:792px;top:498px;color:#f0f0f0;letter-spacing:-0.5px">Custom Data Value</div>
<div class="a" style="left:902px;top:496px;width:28px;height:17px;border:1px solid #c8c8c8;border-radius:2px"></div>
<div class="t" style="left:906px;top:499px;font-size:12px;color:#eee">0.0</div>
<!-- mark dirty -->
<div class="a" style="left:772px;top:537px;width:12px;height:12px;border-radius:50%;border:2px solid #7d0a0a;background:#111"></div>
<svg style="left:784px;top:540px" width="5" height="7"><path d="M0 0 L4 3.5 L0 7Z" fill="#8a0c0c"/></svg>
<div class="t sh" style="left:792px;top:526px;color:#f0f0f0;letter-spacing:-0.5px">Mark Render State Dirty</div>
<div class="a" style="left:799px;top:542px;width:16px;height:16px;border:2px solid #e8e8e8;border-radius:3px;background:#333"></div>

<div class="a" style="left:296px;top:887px;width:150px;height:22px;background:#2e2e2e;border-radius:3px 3px 0 0"></div>
<div class="a" style="left:447px;top:887px;width:150px;height:22px;background:#3b3b3b;border-radius:3px 3px 0 0"></div>
<svg style="left:302px;top:889px" width="16" height="17"><path d="M2 1 H11 L14 4 V15 H2 Z" fill="#dfe6ff"/><path d="M2 1 H11 L14 4 V15 H2 Z" fill="#8fa4e6" opacity=".5"/><path d="M4 5 L8 8 L4 11" stroke="#2a3a7a" stroke-width="1.6" fill="none"/><path d="M8 12 H12" stroke="#2a3a7a" stroke-width="1.4"/></svg>
<div class="t sh" style="left:324px;top:892px;color:#d8d8d8;font-size:12.5px;letter-spacing:-0.35px">Compiler Results</div>
<div class="x" style="left:428px;top:892px;color:#4a4a4a">&#x2715;</div>
<svg style="left:453px;top:889px" width="17" height="17"><circle cx="10" cy="7" r="5.5" fill="url(#bg1)" stroke="#c8d0f0" stroke-width="1"/><path d="M6 11 L2 15.5" stroke="#98a8e8" stroke-width="2" stroke-linecap="round"/></svg>
<div class="t sh" style="left:475px;top:892px;color:#d8d8d8;font-size:12.5px;letter-spacing:-0.35px">Find Results</div>
<div class="x" style="left:579px;top:892px;color:#4a4a4a">&#x2715;</div>
<div class="a" style="left:292px;top:909px;width:1123px;height:169px;background:#3b3b3b"></div>
<div class="a" style="left:294px;top:911px;width:1089px;height:21px;background:#d0d0d0;border-radius:2px"></div>
<div class="t" style="left:299px;top:915px;font-size:12px;color:#8a8a8a;letter-spacing:-0.2px">Enter function or event name to find references...</div>
<svg style="left:1366px;top:914px" width="16" height="15"><circle cx="9.8" cy="6.2" r="5" stroke="#000" stroke-width="2" fill="none"/><path d="M6.2 9.8 L3.2 12.8" stroke="#000" stroke-width="3" stroke-linecap="round"/></svg>
<div class="a" style="left:1387px;top:912px;width:24px;height:20px;background:linear-gradient(#e4e4e4,#c4c4c4);border-radius:2px;border:1px solid #999"></div>
<svg style="left:1391px;top:915px" width="16" height="14"><path d="M2 13 L3 4 L5 1 L7 4 L7 13 Z M9 13 L9 4 L11 1 L13 4 L14 13 Z" fill="#111"/><rect x="6" y="5" width="4" height="3" fill="#111"/></svg>
<div class="a" style="left:294px;top:936px;width:1119px;height:140px;background:linear-gradient(#262626,#1c1c1c 20px);border:1px solid #111"></div>
<div class="a" style="left:1424px;top:48px;width:150px;height:22px;background:#3e3e3e;border-radius:3px 3px 0 0"></div>
<svg style="left:1429px;top:50px" width="18" height="18"><circle cx="7.5" cy="7.5" r="6" fill="#444" stroke="#7d8fe8" stroke-width="1.6"/><path d="M11.5 11.5 L16 16" stroke="#5a74e0" stroke-width="2.2" stroke-linecap="round"/><text x="5.5" y="11" font-family="Liberation Serif" font-weight="bold" font-size="9" fill="#f4f4f4">i</text></svg>
<div class="t sh" style="left:1452px;top:53px;color:#dcdcdc;font-size:12.5px;letter-spacing:-0.35px">Details</div>
<div class="x" style="left:1556px;top:53px;color:#4a4a4a">&#x2715;</div>
<div class="a" style="left:1420px;top:70px;width:496px;height:1008px;background:#3e3e3e"></div>
<div class="a" style="left:1424px;top:75px;width:421px;height:18px;background:#d0d0d0;border-radius:3px"></div>
<div class="t" style="left:1429px;top:78px;font-size:12px;color:#8a8a8a;letter-spacing:-0.1px">Search Details</div>
<svg style="left:1829px;top:77px" width="16" height="15"><circle cx="9.8" cy="6.2" r="5" stroke="#000" stroke-width="2" fill="none"/><path d="M6.2 9.8 L3.2 12.8" stroke="#000" stroke-width="3" stroke-linecap="round"/></svg>
<div class="a" style="left:1854px;top:73px;width:26px;height:22px;background:linear-gradient(#e6e6e6,#b8b8b8);border:1px solid #222;border-radius:2px"></div>
<div class="a" style="left:1861px;top:77px;width:13px;height:2px;background:repeating-linear-gradient(to right,#6a6a6a 0 2px,transparent 2px 3px,#6a6a6a 3px 6px,transparent 6px 7px)"></div>
<div class="a" style="left:1861px;top:80px;width:13px;height:2px;background:repeating-linear-gradient(to right,#6a6a6a 0 2px,transparent 2px 3px,#6a6a6a 3px 6px,transparent 6px 7px)"></div>
<div class="a" style="left:1861px;top:83px;width:13px;height:2px;background:repeating-linear-gradient(to right,#6a6a6a 0 2px,transparent 2px 3px,#6a6a6a 3px 6px,transparent 6px 7px)"></div>
<div class="a" style="left:1861px;top:86px;width:13px;height:2px;background:repeating-linear-gradient(to right,#6a6a6a 0 2px,transparent 2px 3px,#6a6a6a 3px 6px,transparent 6px 7px)"></div>
<div class="a" style="left:1861px;top:89px;width:13px;height:2px;background:repeating-linear-gradient(to right,#6a6a6a 0 2px,transparent 2px 3px,#6a6a6a 3px 6px,transparent 6px 7px)"></div>
<svg style="left:1884px;top:79px" width="30" height="12"><ellipse cx="9" cy="5.5" rx="8.5" ry="4.5" fill="#d8d8d8"/><circle cx="9" cy="5.5" r="3" fill="#4760a8"/><path d="M21 3 H29 L25 7.5 Z" fill="#cfcfcf"/></svg>
<div class="a" style="left:1422px;top:96px;width:493px;height:28px;background:#2f2f2f"></div>
<svg style="left:1425px;top:107px" width="8" height="8"><path d="M7 0 V7 H0 Z" fill="#bdbdbd"/></svg>
<div class="t sh" style="left:1436px;top:104px;font-size:13px;font-weight:bold;color:#e0e0e0;letter-spacing:-0.3px">Variable</div>
<div class="a" style="left:1589px;top:96px;width:1px;height:28px;background:#262626"></div>
<div class="a" style="left:1589px;top:124px;width:1px;height:258px;background:#2c2c2c"></div>
<div class="a" style="left:1910px;top:96px;width:1px;height:860px;background:#383838"></div>
<div class="t" style="left:1438px;top:131px;font-size:11px;color:#d0d0d0;letter-spacing:0.1px">Variable Name</div>
<div class="t" style="left:1438px;top:154px;font-size:11px;color:#d0d0d0;letter-spacing:0.1px">Variable Type</div>
<div class="t" style="left:1438px;top:177px;font-size:11px;color:#d0d0d0;letter-spacing:0.1px">Instance Editable</div>
<div class="t" style="left:1438px;top:198px;font-size:11px;color:#d0d0d0;letter-spacing:0.1px">Blueprint Read Only</div>
<div class="t" style="left:1438px;top:220px;font-size:11px;color:#d0d0d0;letter-spacing:0.1px">Tooltip</div>
<div class="t" style="left:1438px;top:241px;font-size:11px;color:#d0d0d0;letter-spacing:0.1px">Expose on Spawn</div>
<div class="t" style="left:1438px;top:262px;font-size:11px;color:#d0d0d0;letter-spacing:0.1px">Private</div>
<div class="t" style="left:1438px;top:283px;font-size:11px;color:#d0d0d0;letter-spacing:0.1px">Expose to Cinematics</div>
<div class="t" style="left:1438px;top:307px;font-size:11px;color:#d0d0d0;letter-spacing:0.1px">Category</div>
<div class="t" style="left:1438px;top:333px;font-size:11px;color:#d0d0d0;letter-spacing:0.1px">Replication</div>
<div class="t" style="left:1438px;top:360px;font-size:11px;color:#d0d0d0;letter-spacing:0.1px">Replication Condition</div>
<div class="a" style="left:1593px;top:128px;width:183px;height:17px;background:#d8d8d8;border-radius:3px"></div>
<div class="t" style="left:1598px;top:131px;font-size:11px;color:#111;letter-spacing:0.1px">Instanced Static Mesh Component</div>
<div class="a" style="left:1594px;top:151px;width:107px;height:18px;background:linear-gradient(#e6e6e6,#b4b4b4);border:1px solid #2a2a2a;border-radius:2px"></div>
<svg style="left:1595px;top:153px" width="16" height="15"><path d="M1 7 L6 3 L9 5 L9 14 L6.5 14 L6.5 10 L3.5 10 L3.5 14 L1 14 Z" fill="#1a6fd0" stroke="#051830" stroke-width=".9"/><path d="M7 4 L11.5 0.8 L15 3 L15 11 L12.5 11 L12.5 7.5 L9.5 7.5" fill="#2080e0" stroke="#051830" stroke-width=".9"/></svg>
<div class="t" style="left:1611px;top:154px;font-size:11.5px;color:#111;letter-spacing:0px;width:77px;overflow:hidden">Instanced Stati</div>
<svg style="left:1689px;top:157px" width="10" height="6"><path d="M0 0 H9 L4.5 5 Z" fill="#000"/></svg>
<svg style="left:1702px;top:152px" width="16" height="15"><path d="M1 7 L6 3 L9 5 L9 14 L6.5 14 L6.5 10 L3.5 10 L3.5 14 L1 14 Z" fill="#1a6fd0" stroke="#051830" stroke-width=".9"/><path d="M7 4 L11.5 0.8 L15 3 L15 11 L12.5 11 L12.5 7.5 L9.5 7.5" fill="#2080e0" stroke="#051830" stroke-width=".9"/></svg>
<div class="a" style="left:1594px;top:176px;width:14px;height:14px;background:#b0b0b0;border-radius:2px"></div>
<div class="a" style="left:1594px;top:197px;width:14px;height:14px;background:#b0b0b0;border-radius:2px"></div>
<div class="a" style="left:1594px;top:240px;width:14px;height:14px;background:#b0b0b0;border-radius:2px"></div>
<div class="a" style="left:1594px;top:261px;width:14px;height:14px;background:#b0b0b0;border-radius:2px"></div>
<div class="a" style="left:1594px;top:282px;width:14px;height:14px;background:#b0b0b0;border-radius:2px"></div>
<div class="a" style="left:1593px;top:217px;width:125px;height:17px;background:#d8d8d8;border-radius:3px"></div>
<div class="a" style="left:1594px;top:303px;width:123px;height:19px;background:linear-gradient(to right,#f4f4f4 0,#f0f0f0 80%,#b8b8b8 80%,#a8a8a8 100%);border-radius:2px;box-shadow:0 1px 0 #222"></div>
<div class="t" style="left:1600px;top:307px;font-size:11.5px;color:#111;letter-spacing:0px">Default</div>
<svg style="left:1700px;top:310px" width="10" height="6"><path d="M0 0 H9 L4.5 5 Z" fill="#000"/></svg>
<div class="a" style="left:1594px;top:329px;width:123px;height:20px;background:linear-gradient(#f0f0f0,#d0d0d0 45%,#aaa);border-radius:2px;box-shadow:0 1px 0 #222"></div>
<div class="t" style="left:1599px;top:333px;font-size:13px;color:#111;letter-spacing:-0.2px">None</div>
<svg style="left:1701px;top:337px" width="10" height="6"><path d="M0 0 H9 L4.5 5 Z" fill="#000"/></svg>
<div class="a" style="left:1594px;top:356px;width:123px;height:20px;background:linear-gradient(#858585,#6e6e6e 50%,#7a7a7a);border-radius:2px"></div>
<div class="t" style="left:1599px;top:360px;font-size:13px;color:#2e2e2e;letter-spacing:-0.2px">None</div>
<svg style="left:1701px;top:364px" width="10" height="6"><path d="M0 0 H9 L4.5 5 Z" fill="#2a2a2a"/></svg>
<div class="a" style="left:1422px;top:382px;width:493px;height:13px;background:#363636"></div>
<svg style="left:1656px;top:384px" width="12" height="8"><rect x="0.5" y="0" width="10" height="1.3" fill="#ddd"/><path d="M0.5 2.3 H10.5 L5.5 7.5 Z" fill="#ddd"/></svg>
<div class="a" style="left:1422px;top:396px;width:493px;height:28px;background:#2f2f2f"></div>
<svg style="left:1425px;top:407px" width="8" height="8"><path d="M7 0 V7 H0 Z" fill="#bdbdbd"/></svg>
<div class="t sh" style="left:1436px;top:404px;font-size:13px;font-weight:bold;color:#e0e0e0;letter-spacing:-0.3px">Default Value</div>
<div class="a" style="left:1589px;top:396px;width:1px;height:28px;background:#262626"></div>
<div class="a" style="left:1589px;top:424px;width:1px;height:93px;background:#2c2c2c"></div>
<div class="t" style="left:1438px;top:458px;font-size:11px;color:#d0d0d0;letter-spacing:0.1px">Instanced Static Mesh Compo</div>
<div class="a" style="left:1598px;top:432px;width:64px;height:65px;background:radial-gradient(circle at 60% 55%,#5c5c5c,#4a4a4a 80%);box-shadow:1px 1px 2px #111"></div>
<div class="a" style="left:1598px;top:493px;width:64px;height:3px;background:#f2f2f2"></div>
<div class="t" style="left:1619px;top:460px;font-size:9px;color:#d4d4d4;letter-spacing:-0.2px">None</div>
<div class="a" style="left:1669px;top:444px;width:170px;height:19px;background:#565656;border-radius:3px"></div>
<div class="t sh" style="left:1670px;top:447px;font-size:11.5px;color:#e0e0e0;letter-spacing:-0.1px">None</div>
<svg style="left:1825px;top:451px" width="10" height="6"><path d="M0 0 H9 L4.5 5 Z" fill="#e0e0e0"/></svg>
<svg style="left:1674px;top:469px" width="14" height="13"><path d="M1 6.5 L6.5 1.5 V4.5 H13 V8.5 H6.5 V11.5 Z" fill="#e8e8e8"/></svg>
<svg style="left:1697px;top:468px" width="15" height="15"><circle cx="9" cy="6" r="4" stroke="#d8d8d8" stroke-width="1.8" fill="none"/><path d="M6 9 L2.5 12.5" stroke="#d8d8d8" stroke-width="2.4" stroke-linecap="round"/></svg>
<div class="a" style="left:1422px;top:517px;width:493px;height:28px;background:#2f2f2f"></div>
<svg style="left:1425px;top:528px" width="8" height="8"><path d="M7 0 V7 H0 Z" fill="#bdbdbd"/></svg>
<div class="t sh" style="left:1436px;top:525px;font-size:13px;font-weight:bold;color:#e0e0e0;letter-spacing:-0.3px">Events</div>
<div class="a" style="left:1589px;top:517px;width:1px;height:28px;background:#262626"></div>
<div class="a" style="left:1589px;top:545px;width:1px;height:411px;background:#2c2c2c"></div>
<svg style="left:1438px;top:550px" width="16" height="16"><path d="M8 1.5 L14.5 8 L8 14.5 L1.5 8 Z" stroke="#ececec" stroke-width="2" fill="none" stroke-linejoin="round"/><path d="M1.5 8 L7 2.5 L7 13.5 Z" fill="#ececec"/><rect x="4.3" y="6.5" width="3.2" height="3" fill="#3e3e3e"/></svg>
<div class="t" style="left:1459px;top:552px;font-size:11px;color:#d0d0d0;letter-spacing:0.1px;width:129px;overflow:hidden">On Component Hit</div>
<div class="a" style="left:1593px;top:548px;width:150px;height:19px;background:#4ca64c;border-radius:1px"></div>
<svg style="left:1662px;top:552px" width="11" height="11"><path d="M5.5 0 V11 M0 5.5 H11" stroke="#fff" stroke-width="2.4"/></svg>
<svg style="left:1438px;top:575px" width="16" height="16"><path d="M8 1.5 L14.5 8 L8 14.5 L1.5 8 Z" stroke="#ececec" stroke-width="2" fill="none" stroke-linejoin="round"/><path d="M1.5 8 L7 2.5 L7 13.5 Z" fill="#ececec"/><rect x="4.3" y="6.5" width="3.2" height="3" fill="#3e3e3e"/></svg>
<div class="t" style="left:1459px;top:577px;font-size:11px;color:#d0d0d0;letter-spacing:0.1px;width:129px;overflow:hidden">On Component Begin Ove</div>
<div class="a" style="left:1593px;top:573px;width:150px;height:19px;background:#4ca64c;border-radius:1px"></div>
<svg style="left:1662px;top:577px" width="11" height="11"><path d="M5.5 0 V11 M0 5.5 H11" stroke="#fff" stroke-width="2.4"/></svg>
<svg style="left:1438px;top:600px" width="16" height="16"><path d="M8 1.5 L14.5 8 L8 14.5 L1.5 8 Z" stroke="#ececec" stroke-width="2" fill="none" stroke-linejoin="round"/><path d="M1.5 8 L7 2.5 L7 13.5 Z" fill="#ececec"/><rect x="4.3" y="6.5" width="3.2" height="3" fill="#3e3e3e"/></svg>
<div class="t" style="left:1459px;top:602px;font-size:11px;color:#d0d0d0;letter-spacing:0.1px;width:129px;overflow:hidden">On Component End Overla</div>
<div class="a" style="left:1593px;top:598px;width:150px;height:19px;background:#4ca64c;border-radius:1px"></div>
<svg style="left:1662px;top:602px" width="11" height="11"><path d="M5.5 0 V11 M0 5.5 H11" stroke="#fff" stroke-width="2.4"/></svg>
<svg style="left:1438px;top:625px" width="16" height="16"><path d="M8 1.5 L14.5 8 L8 14.5 L1.5 8 Z" stroke="#ececec" stroke-width="2" fill="none" stroke-linejoin="round"/><path d="M1.5 8 L7 2.5 L7 13.5 Z" fill="#ececec"/><rect x="4.3" y="6.5" width="3.2" height="3" fill="#3e3e3e"/></svg>
<div class="t" style="left:1459px;top:627px;font-size:11px;color:#d0d0d0;letter-spacing:0.1px;width:129px;overflow:hidden">On Component Wake</div>
<div class="a" style="left:1593px;top:623px;width:150px;height:19px;background:#4ca64c;border-radius:1px"></div>
<svg style="left:1662px;top:627px" width="11" height="11"><path d="M5.5 0 V11 M0 5.5 H11" stroke="#fff" stroke-width="2.4"/></svg>
<svg style="left:1438px;top:650px" width="16" height="16"><path d="M8 1.5 L14.5 8 L8 14.5 L1.5 8 Z" stroke="#ececec" stroke-width="2" fill="none" stroke-linejoin="round"/><path d="M1.5 8 L7 2.5 L7 13.5 Z" fill="#ececec"/><rect x="4.3" y="6.5" width="3.2" height="3" fill="#3e3e3e"/></svg>
<div class="t" style="left:1459px;top:652px;font-size:11px;color:#d0d0d0;letter-spacing:0.1px;width:129px;overflow:hidden">On Component Sleep</div>
<div class="a" style="left:1593px;top:648px;width:150px;height:19px;background:#4ca64c;border-radius:1px"></div>
<svg style="left:1662px;top:652px" width="11" height="11"><path d="M5.5 0 V11 M0 5.5 H11" stroke="#fff" stroke-width="2.4"/></svg>
<svg style="left:1438px;top:675px" width="16" height="16"><path d="M8 1.5 L14.5 8 L8 14.5 L1.5 8 Z" stroke="#ececec" stroke-width="2" fill="none" stroke-linejoin="round"/><path d="M1.5 8 L7 2.5 L7 13.5 Z" fill="#ececec"/><rect x="4.3" y="6.5" width="3.2" height="3" fill="#3e3e3e"/></svg>
<div class="t" style="left:1459px;top:677px;font-size:11px;color:#d0d0d0;letter-spacing:0.1px;width:129px;overflow:hidden">On Begin Cursor Over</div>
<div class="a" style="left:1593px;top:673px;width:150px;height:19px;background:#4ca64c;border-radius:1px"></div>
<svg style="left:1662px;top:677px" width="11" height="11"><path d="M5.5 0 V11 M0 5.5 H11" stroke="#fff" stroke-width="2.4"/></svg>
<svg style="left:1438px;top:700px" width="16" height="16"><path d="M8 1.5 L14.5 8 L8 14.5 L1.5 8 Z" stroke="#ececec" stroke-width="2" fill="none" stroke-linejoin="round"/><path d="M1.5 8 L7 2.5 L7 13.5 Z" fill="#ececec"/><rect x="4.3" y="6.5" width="3.2" height="3" fill="#3e3e3e"/></svg>
<div class="t" style="left:1459px;top:702px;font-size:11px;color:#d0d0d0;letter-spacing:0.1px;width:129px;overflow:hidden">On End Cursor Over</div>
<div class="a" style="left:1593px;top:698px;width:150px;height:19px;background:#4ca64c;border-radius:1px"></div>
<svg style="left:1662px;top:702px" width="11" height="11"><path d="M5.5 0 V11 M0 5.5 H11" stroke="#fff" stroke-width="2.4"/></svg>
<svg style="left:1438px;top:725px" width="16" height="16"><path d="M8 1.5 L14.5 8 L8 14.5 L1.5 8 Z" stroke="#ececec" stroke-width="2" fill="none" stroke-linejoin="round"/><path d="M1.5 8 L7 2.5 L7 13.5 Z" fill="#ececec"/><rect x="4.3" y="6.5" width="3.2" height="3" fill="#3e3e3e"/></svg>
<div class="t" style="left:1459px;top:727px;font-size:11px;color:#d0d0d0;letter-spacing:0.1px;width:129px;overflow:hidden">On Clicked</div>
<div class="a" style="left:1593px;top:723px;width:150px;height:19px;background:#4ca64c;border-radius:1px"></div>
<svg style="left:1662px;top:727px" width="11" height="11"><path d="M5.5 0 V11 M0 5.5 H11" stroke="#fff" stroke-width="2.4"/></svg>
<svg style="left:1438px;top:750px" width="16" height="16"><path d="M8 1.5 L14.5 8 L8 14.5 L1.5 8 Z" stroke="#ececec" stroke-width="2" fill="none" stroke-linejoin="round"/><path d="M1.5 8 L7 2.5 L7 13.5 Z" fill="#ececec"/><rect x="4.3" y="6.5" width="3.2" height="3" fill="#3e3e3e"/></svg>
<div class="t" style="left:1459px;top:752px;font-size:11px;color:#d0d0d0;letter-spacing:0.1px;width:129px;overflow:hidden">On Released</div>
<div class="a" style="left:1593px;top:748px;width:150px;height:19px;background:#4ca64c;border-radius:1px"></div>
<svg style="left:1662px;top:752px" width="11" height="11"><path d="M5.5 0 V11 M0 5.5 H11" stroke="#fff" stroke-width="2.4"/></svg>
<svg style="left:1438px;top:775px" width="16" height="16"><path d="M8 1.5 L14.5 8 L8 14.5 L1.5 8 Z" stroke="#ececec" stroke-width="2" fill="none" stroke-linejoin="round"/><path d="M1.5 8 L7 2.5 L7 13.5 Z" fill="#ececec"/><rect x="4.3" y="6.5" width="3.2" height="3" fill="#3e3e3e"/></svg>
<div class="t" style="left:1459px;top:777px;font-size:11px;color:#d0d0d0;letter-spacing:0.1px;width:129px;overflow:hidden">On Input Touch Begin</div>
<div class="a" style="left:1593px;top:773px;width:150px;height:19px;background:#4ca64c;border-radius:1px"></div>
<svg style="left:1662px;top:777px" width="11" height="11"><path d="M5.5 0 V11 M0 5.5 H11" stroke="#fff" stroke-width="2.4"/></svg>
<svg style="left:1438px;top:800px" width="16" height="16"><path d="M8 1.5 L14.5 8 L8 14.5 L1.5 8 Z" stroke="#ececec" stroke-width="2" fill="none" stroke-linejoin="round"/><path d="M1.5 8 L7 2.5 L7 13.5 Z" fill="#ececec"/><rect x="4.3" y="6.5" width="3.2" height="3" fill="#3e3e3e"/></svg>
<div class="t" style="left:1459px;top:802px;font-size:11px;color:#d0d0d0;letter-spacing:0.1px;width:129px;overflow:hidden">On Input Touch End</div>
<div class="a" style="left:1593px;top:798px;width:150px;height:19px;background:#4ca64c;border-radius:1px"></div>
<svg style="left:1662px;top:802px" width="11" height="11"><path d="M5.5 0 V11 M0 5.5 H11" stroke="#fff" stroke-width="2.4"/></svg>
<svg style="left:1438px;top:825px" width="16" height="16"><path d="M8 1.5 L14.5 8 L8 14.5 L1.5 8 Z" stroke="#ececec" stroke-width="2" fill="none" stroke-linejoin="round"/><path d="M1.5 8 L7 2.5 L7 13.5 Z" fill="#ececec"/><rect x="4.3" y="6.5" width="3.2" height="3" fill="#3e3e3e"/></svg>
<div class="t" style="left:1459px;top:827px;font-size:11px;color:#d0d0d0;letter-spacing:0.1px;width:129px;overflow:hidden">On Input Touch Enter</div>
<div class="a" style="left:1593px;top:823px;width:150px;height:19px;background:#4ca64c;border-radius:1px"></div>
<svg style="left:1662px;top:827px" width="11" height="11"><path d="M5.5 0 V11 M0 5.5 H11" stroke="#fff" stroke-width="2.4"/></svg>
<svg style="left:1438px;top:850px" width="16" height="16"><path d="M8 1.5 L14.5 8 L8 14.5 L1.5 8 Z" stroke="#ececec" stroke-width="2" fill="none" stroke-linejoin="round"/><path d="M1.5 8 L7 2.5 L7 13.5 Z" fill="#ececec"/><rect x="4.3" y="6.5" width="3.2" height="3" fill="#3e3e3e"/></svg>
<div class="t" style="left:1459px;top:852px;font-size:11px;color:#d0d0d0;letter-spacing:0.1px;width:129px;overflow:hidden">On Input Touch Leave</div>
<div class="a" style="left:1593px;top:848px;width:150px;height:19px;background:#4ca64c;border-radius:1px"></div>
<svg style="left:1662px;top:852px" width="11" height="11"><path d="M5.5 0 V11 M0 5.5 H11" stroke="#fff" stroke-width="2.4"/></svg>
<svg style="left:1438px;top:875px" width="16" height="16"><path d="M8 1.5 L14.5 8 L8 14.5 L1.5 8 Z" stroke="#ececec" stroke-width="2" fill="none" stroke-linejoin="round"/><path d="M1.5 8 L7 2.5 L7 13.5 Z" fill="#ececec"/><rect x="4.3" y="6.5" width="3.2" height="3" fill="#3e3e3e"/></svg>
<div class="t" style="left:1459px;top:877px;font-size:11px;color:#d0d0d0;letter-spacing:0.1px;width:129px;overflow:hidden">Physics Volume Changed</div>
<div class="a" style="left:1593px;top:873px;width:150px;height:19px;background:#4ca64c;border-radius:1px"></div>
<svg style="left:1662px;top:877px" width="11" height="11"><path d="M5.5 0 V11 M0 5.5 H11" stroke="#fff" stroke-width="2.4"/></svg>
<svg style="left:1438px;top:900px" width="16" height="16"><path d="M8 1.5 L14.5 8 L8 14.5 L1.5 8 Z" stroke="#ececec" stroke-width="2" fill="none" stroke-linejoin="round"/><path d="M1.5 8 L7 2.5 L7 13.5 Z" fill="#ececec"/><rect x="4.3" y="6.5" width="3.2" height="3" fill="#3e3e3e"/></svg>
<div class="t" style="left:1459px;top:902px;font-size:11px;color:#d0d0d0;letter-spacing:0.1px;width:129px;overflow:hidden">On Component Activated</div>
<div class="a" style="left:1593px;top:898px;width:150px;height:19px;background:#4ca64c;border-radius:1px"></div>
<svg style="left:1662px;top:902px" width="11" height="11"><path d="M5.5 0 V11 M0 5.5 H11" stroke="#fff" stroke-width="2.4"/></svg>
<svg style="left:1438px;top:925px" width="16" height="16"><path d="M8 1.5 L14.5 8 L8 14.5 L1.5 8 Z" stroke="#ececec" stroke-width="2" fill="none" stroke-linejoin="round"/><path d="M1.5 8 L7 2.5 L7 13.5 Z" fill="#ececec"/><rect x="4.3" y="6.5" width="3.2" height="3" fill="#3e3e3e"/></svg>
<div class="t" style="left:1459px;top:927px;font-size:11px;color:#d0d0d0;letter-spacing:0.1px;width:129px;overflow:hidden">On Component Deactivate</div>
<div class="a" style="left:1593px;top:923px;width:150px;height:19px;background:#4ca64c;border-radius:1px"></div>
<svg style="left:1662px;top:927px" width="11" height="11"><path d="M5.5 0 V11 M0 5.5 H11" stroke="#fff" stroke-width="2.4"/></svg>
</div></body></html>
